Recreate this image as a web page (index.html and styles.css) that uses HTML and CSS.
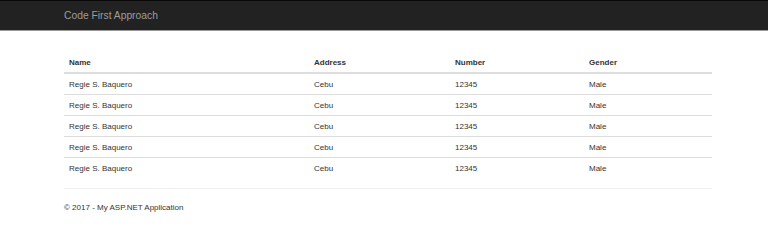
FILE: index.html
```html
<!DOCTYPE html>
<html>
<head>
<meta charset="utf-8">
<title>Code First Approach</title>
<link rel="stylesheet" href="styles.css">
</head>
<body>
<header class="navbar">
  <div class="container">
    <span class="brand">Code First Approach</span>
  </div>
</header>
<main class="container body-content">
  <table class="table">
    <thead>
      <tr><th class="c-name">Name</th><th class="c-addr">Address</th><th class="c-num">Number</th><th class="c-gen">Gender</th></tr>
    </thead>
    <tbody>
      <tr><td>Regie S. Baquero</td><td>Cebu</td><td>12345</td><td>Male</td></tr>
      <tr><td>Regie S. Baquero</td><td>Cebu</td><td>12345</td><td>Male</td></tr>
      <tr><td>Regie S. Baquero</td><td>Cebu</td><td>12345</td><td>Male</td></tr>
      <tr><td>Regie S. Baquero</td><td>Cebu</td><td>12345</td><td>Male</td></tr>
      <tr><td>Regie S. Baquero</td><td>Cebu</td><td>12345</td><td>Male</td></tr>
    </tbody>
  </table>
  <hr class="rule">
  <footer class="footer">
    <p>&copy; 2017 - My ASP.NET Application</p>
  </footer>
</main>
</body>
</html>
```

FILE: styles.css
```css
html, body {
  margin: 0;
  padding: 0;
  background: #fff;
}
body {
  font-family: "Liberation Sans", Arial, sans-serif;
  font-size: 8px;
  line-height: 10px;
  color: #333;
}
.container {
  width: 648px;
  margin: 0 0 0 64px;
}
.navbar {
  background: #222;
  border-top: 1px solid #080808;
  border-bottom: 1px solid #9a9a9a;
  box-sizing: border-box;
  height: 31px;
}
.navbar .container {
  display: flex;
  align-items: center;
  height: 29px;
}
.brand {
  color: #9d9d9d;
  font-size: 10.3px;
  line-height: 14px;
}
.body-content {
  padding-top: 21px;
}
.table {
  width: 100%;
  border-collapse: collapse;
  border-spacing: 0;
}
.table th,
.table td {
  padding: 6px 5px 4px;
  text-align: left;
  vertical-align: top;
  line-height: 10px;
}
.table th {
  font-weight: bold;
  border-bottom: 2px solid #ddd;
}
.table tbody tr + tr td {
  border-top: 1px solid #ddd;
}
.c-name { width: 235px; }
.c-addr { width: 131px; }
.c-num { width: 124px; }
.rule {
  border: 0;
  border-top: 1px solid #eee;
  margin: 10px 0 0;
}
.footer p {
  margin: 14px 0 0;
  line-height: 10px;
}
```
